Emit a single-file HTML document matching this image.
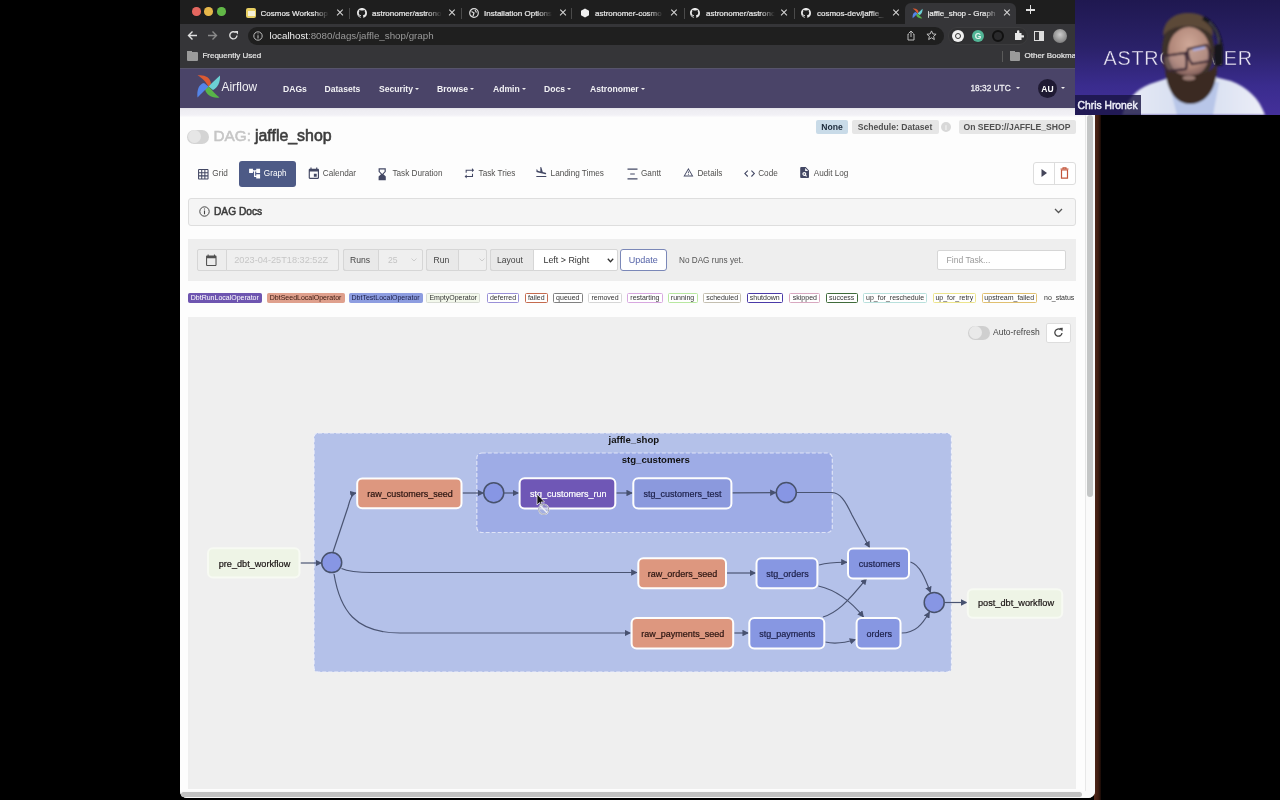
<!DOCTYPE html>
<html><head><meta charset="utf-8">
<style>
*{box-sizing:border-box;margin:0;padding:0}
html,body{width:1280px;height:800px;overflow:hidden;background:#000;font-family:"Liberation Sans",sans-serif;-webkit-font-smoothing:antialiased}
#win,.gl{will-change:transform}
.a{position:absolute}
.t{position:absolute;white-space:nowrap;line-height:1}
#win{position:absolute;left:180px;top:0;width:915px;height:798px;background:#fdfdfd;overflow:hidden;border-radius:0 0 7px 7px}
.tab{position:absolute;top:8.7px;font-size:8px;color:#eaeaea;white-space:nowrap;line-height:10px;-webkit-text-stroke:0.2px #eaeaea}
.x{position:absolute;top:9.5px;width:7px;height:7px;font-size:0}
.x:before,.x:after{content:"";position:absolute;left:-0.5px;top:2.8px;width:8px;height:1.3px;background:#d8d8d8;transform:rotate(45deg)}
.x:after{transform:rotate(-45deg)}
.sep{position:absolute;top:8px;width:1px;height:11px;background:#4a4a4a}
.nav{position:absolute;top:83.6px;font-size:8.6px;font-weight:bold;color:#f2f2f5;white-space:nowrap;line-height:10px}
.car{display:inline-block;width:0;height:0;border-left:2.5px solid transparent;border-right:2.5px solid transparent;border-top:2.5px solid #eee;margin-left:2px;vertical-align:middle}
.tb{position:absolute;top:169px;font-size:8.2px;color:#51504f;white-space:nowrap;line-height:10px}
.lg{position:absolute;top:292.5px;height:10.5px;font-size:7px;line-height:8.6px;border:1px solid;border-radius:1.5px;color:#333;text-align:center;white-space:nowrap}
.node{position:absolute;height:31px;border:2px solid #fff;border-radius:5px;font-size:9px;line-height:27px;text-align:center;color:#222;white-space:nowrap}
</style></head><body>
<div class="a" style="left:1094px;top:0;width:7px;height:800px;background:linear-gradient(90deg,#52281a,#3e1c10 60%,#180a06)"></div>
<div id="win">
  <!-- tab strip -->
  <div class="a" style="left:0;top:0;width:915px;height:24px;background:#1e1e1e"></div>
  <div class="a" style="left:12px;top:7px;width:8.5px;height:8.5px;border-radius:50%;background:#e4675f"></div>
  <div class="a" style="left:24px;top:7px;width:8.5px;height:8.5px;border-radius:50%;background:#e6b74a"></div>
  <div class="a" style="left:37px;top:7px;width:8.5px;height:8.5px;border-radius:50%;background:#62b847"></div>

  <div class="a" style="left:66px;top:8px;width:10px;height:10px;border-radius:2px;background:#e8cf63"></div>
  <div class="a" style="left:67.5px;top:11px;width:7px;height:5px;background:#f5f0d8"></div>
  <div class="tab" style="left:80.5px;width:68px;overflow:hidden;-webkit-mask-image:linear-gradient(90deg,#000 78%,transparent 100%)">Cosmos Workshop</div>
  <div class="x" style="left:156.5px"></div>
  <div class="sep" style="left:169px"></div>

  <svg class="a" style="left:177px;top:8px" width="10" height="10" viewBox="0 0 16 16"><path fill="#e8e8e8" d="M8 0C3.58 0 0 3.58 0 8c0 3.54 2.29 6.53 5.47 7.59.4.07.55-.17.55-.38v-1.34c-2.23.48-2.7-1.07-2.7-1.07-.36-.92-.89-1.17-.89-1.17-.73-.5.05-.49.05-.49.8.06 1.23.83 1.23.83.72 1.22 1.87.87 2.33.66.07-.52.28-.87.51-1.07-1.78-.2-3.65-.89-3.65-3.95 0-.87.31-1.59.83-2.15-.08-.2-.36-1.02.08-2.12 0 0 .67-.21 2.2.82A7.7 7.7 0 018 3.87c.68 0 1.36.09 2 .27 1.53-1.04 2.2-.82 2.2-.82.44 1.1.16 1.92.08 2.12.51.56.82 1.27.82 2.15 0 3.07-1.87 3.75-3.65 3.95.29.25.54.73.54 1.48v2.2c0 .21.15.46.55.38A8.01 8.01 0 0016 8c0-4.42-3.58-8-8-8z"/></svg>
  <div class="tab" style="left:192px;width:70px;overflow:hidden;-webkit-mask-image:linear-gradient(90deg,#000 78%,transparent 100%)">astronomer/astrono</div>
  <div class="x" style="left:268.5px"></div>
  <div class="sep" style="left:281px"></div>

  <svg class="a" style="left:289px;top:8px" width="10" height="10" viewBox="0 0 10 10"><circle cx="5" cy="5" r="4.3" fill="none" stroke="#ddd" stroke-width="1.2"/><path d="M2.5 3.5 L5 5 L4 8 M6 2 L7.5 4.5" stroke="#ddd" stroke-width="1.2" fill="none"/></svg>
  <div class="tab" style="left:304px;width:68px;overflow:hidden;-webkit-mask-image:linear-gradient(90deg,#000 78%,transparent 100%)">Installation Options</div>
  <div class="x" style="left:379.5px"></div>
  <div class="sep" style="left:391px"></div>

  <svg class="a" style="left:400px;top:8px" width="10" height="10" viewBox="0 0 10 10"><path d="M5 0.5 L9 2.8 V7.2 L5 9.5 L1 7.2 V2.8Z" fill="#f0f0f0"/></svg>
  <div class="tab" style="left:415px;width:68px;overflow:hidden;-webkit-mask-image:linear-gradient(90deg,#000 78%,transparent 100%)">astronomer-cosmo</div>
  <div class="x" style="left:490.5px"></div>
  <div class="sep" style="left:504px"></div>

  <svg class="a" style="left:510px;top:8px" width="10" height="10" viewBox="0 0 16 16"><path fill="#e8e8e8" d="M8 0C3.58 0 0 3.58 0 8c0 3.54 2.29 6.53 5.47 7.59.4.07.55-.17.55-.38v-1.34c-2.23.48-2.7-1.070-2.7-1.07-.36-.92-.89-1.17-.89-1.17-.73-.5.05-.49.05-.49.8.06 1.23.83 1.23.83.72 1.22 1.870.87 2.33.66.07-.52.28-.87.51-1.07-1.78-.2-3.65-.89-3.65-3.95 0-.87.31-1.59.83-2.15-.08-.2-.36-1.02.08-2.12 0 0 .67-.21 2.2.82A7.7 7.7 0 018 3.87c.68 0 1.36.09 2 .27 1.53-1.04 2.2-.82 2.2-.82.44 1.1.16 1.92.08 2.12.51.56.82 1.27.82 2.15 0 3.07-1.87 3.75-3.65 3.95.29.25.54.73.54 1.48v2.2c0 .21.15.46.55.38A8.01 8.01 0 0016 8c0-4.42-3.58-8-8-8z"/></svg>
  <div class="tab" style="left:526px;width:69px;overflow:hidden;-webkit-mask-image:linear-gradient(90deg,#000 78%,transparent 100%)">astronomer/astronc</div>
  <div class="x" style="left:600.5px"></div>
  <div class="sep" style="left:614px"></div>

  <svg class="a" style="left:621px;top:8px" width="10" height="10" viewBox="0 0 16 16"><path fill="#e8e8e8" d="M8 0C3.58 0 0 3.58 0 8c0 3.54 2.29 6.53 5.47 7.590.4.07.55-.17.55-.38v-1.34c-2.23.48-2.7-1.07-2.7-1.07-.36-.92-.89-1.17-.89-1.17-.73-.5.05-.49.05-.49.8.06 1.23.83 1.23.83.72 1.22 1.87.87 2.33.66.07-.52.28-.87.51-1.07-1.78-.2-3.65-.89-3.65-3.95 0-.87.31-1.59.83-2.15-.08-.2-.36-1.02.08-2.12 0 0 .67-.21 2.2.82A7.7 7.7 0 018 3.87c.68 0 1.36.09 2 .27 1.53-1.04 2.2-.82 2.2-.82.44 1.1.16 1.92.08 2.12.51.56.82 1.27.82 2.15 0 3.07-1.87 3.75-3.65 3.95.29.25.54.73.54 1.48v2.2c0 .21.15.46.55.38A8.010 8.01 0 0016 8c0-4.42-3.58-8-8-8z"/></svg>
  <div class="tab" style="left:637px;width:69px;overflow:hidden;-webkit-mask-image:linear-gradient(90deg,#000 78%,transparent 100%)">cosmos-dev/jaffle_</div>
  <div class="x" style="left:712.5px"></div>

  <!-- active tab -->
  <div class="a" style="left:725px;top:3px;width:111px;height:22px;background:#353538;border-radius:6px 6px 0 0"></div>
  <svg class="a" style="left:732px;top:7.5px" width="11" height="11" viewBox="0 0 25 25"><path d="M12.5 12.5 C10 8 6 3.5 1.5 1.5 C8 0.5 14.5 3 15 10 Z" fill="#dc5a32"/><path d="M12.5 12.5 C16 9 20 5 24 1.5 C24.5 8 21.5 14 17 16 Z" fill="#6cd0d4"/><path d="M12.5 12.5 C16 16 20 21 23.5 23.5 C16 24.5 10 21 9 15 Z" fill="#58b548"/><path d="M12.5 12.5 C9 16 5 20 1.5 23.5 C0.5 16 3 10 8 9 Z" fill="#5484e8"/></svg>
  <div class="tab" style="left:747.5px;color:#f0f0f0;width:71px;overflow:hidden;-webkit-mask-image:linear-gradient(90deg,#000 78%,transparent 100%)">jaffle_shop - Graph</div>
  <div class="x" style="left:823.5px"></div>
  <div class="a" style="left:846px;top:9px;width:9px;height:1.5px;background:#e0e0e0"></div><div class="a" style="left:849.75px;top:5.25px;width:1.5px;height:9px;background:#e0e0e0"></div>

  <!-- toolbar -->
  <div class="a" style="left:0;top:24px;width:915px;height:23px;background:#353538"></div>
  <svg class="a" style="left:7px;top:30px" width="11" height="11" viewBox="0 0 11 11"><path d="M10 5.5H1.5M5.5 1.5L1.5 5.5L5.5 9.5" stroke="#e0e0e0" stroke-width="1.4" fill="none"/></svg>
  <svg class="a" style="left:27px;top:30px" width="11" height="11" viewBox="0 0 11 11"><path d="M1 5.5H9.5M5.5 1.5L9.5 5.5L5.5 9.5" stroke="#8a8a8a" stroke-width="1.4" fill="none"/></svg>
  <svg class="a" style="left:48px;top:30px" width="11" height="11" viewBox="0 0 11 11"><path d="M9 5.5A3.6 3.6 0 1 1 7.8 2.6" stroke="#e0e0e0" stroke-width="1.4" fill="none"/><path d="M6.5 1 L10 1 L10 4.5Z" fill="#e0e0e0"/></svg>
  <div class="a" style="left:68px;top:27px;width:696px;height:18px;border-radius:9px;background:#1f1f1f"></div>
  <svg class="a" style="left:73px;top:31px" width="10" height="10" viewBox="0 0 10 10"><circle cx="5" cy="5" r="4.2" fill="none" stroke="#bbb" stroke-width="1"/><path d="M5 4.2V7.5M5 2.4V3.3" stroke="#bbb" stroke-width="1.1"/></svg>
  <div class="t" style="left:89.5px;top:31px;font-size:9.75px;color:#f0f0f0">localhost<span style="color:#9a9a9a">:8080/dags/jaffle_shop/graph</span></div>
  <svg class="a" style="left:726px;top:30px" width="10" height="11" viewBox="0 0 10 11"><path d="M3 4H2V10H8V4H7M5 7V1M3 3L5 1L7 3" stroke="#bbb" stroke-width="1" fill="none"/></svg>
  <svg class="a" style="left:746px;top:30px" width="11" height="11" viewBox="0 0 12 12"><path d="M6 1L7.5 4.3L11 4.6L8.3 6.9L9.1 10.4L6 8.5L2.9 10.4L3.7 6.9L1 4.6L4.5 4.3Z" stroke="#ccc" stroke-width="1" fill="none"/></svg>
  <div class="a" style="left:768px;top:27px;width:80px;height:18px;border-radius:9px;background:#303032;border:1px solid #3c3c3e"></div>
  <div class="a" style="left:772px;top:30px;width:12px;height:12px;border-radius:50%;background:#f0f0f0"></div>
  <div class="a" style="left:775px;top:33px;width:6px;height:6px;border-radius:50%;border:1.5px solid #333"></div>
  <div class="a" style="left:792px;top:30px;width:12px;height:12px;border-radius:50%;background:#52b596"></div>
  <div class="t" style="left:792px;top:32px;width:12px;text-align:center;font-size:8.5px;font-weight:bold;color:#e8f5ef">G</div>
  <div class="a" style="left:812px;top:30px;width:12px;height:12px;border-radius:50%;background:#2a2a2c;border:2.5px solid #111"></div>
  <svg class="a" style="left:833px;top:30px" width="11" height="11" viewBox="0 0 11 11"><path d="M2 3H4V1.5A1.2 1.2 0 0 1 6.4 1.5V3H8.5V5.2H10A1.2 1.2 0 0 1 10 7.6H8.5V10H2Z" fill="#e8e8e8"/></svg>
  <div class="a" style="left:854px;top:31px;width:10px;height:10px;border:1.5px solid #ddd"></div>
  <div class="a" style="left:859px;top:31px;width:5px;height:10px;background:#ddd"></div>
  <div class="a" style="left:873px;top:29px;width:14px;height:14px;border-radius:50%;background:radial-gradient(circle at 50% 40%,#ccc,#666)"></div>

  <!-- bookmarks -->
  <div class="a" style="left:0;top:47px;width:915px;height:21px;background:#353538"></div>
  <div class="a" style="left:7px;top:52px;width:10.5px;height:8.5px;border-radius:1px;background:#9a9a9a"></div>
  <div class="a" style="left:7px;top:51px;width:5px;height:2px;background:#9a9a9a"></div>
  <div class="tab" style="left:22.4px;top:51px;color:#e4e4e4">Frequently Used</div>
  <div class="a" style="left:822px;top:51px;width:1px;height:11px;background:#5a5a5a"></div>
  <div class="a" style="left:829.5px;top:52px;width:10.5px;height:8.5px;border-radius:1px;background:#9a9a9a"></div>
  <div class="a" style="left:829.5px;top:51px;width:5px;height:2px;background:#9a9a9a"></div>
  <div class="tab" style="left:844.5px;top:51px;color:#e4e4e4">Other Bookmarks</div>

  <!-- navbar -->
  <div class="a" style="left:0;top:68px;width:915px;height:40px;background:#4a4468"></div>
  <div class="a" style="left:0;top:68px;width:915px;height:1px;background:#57546c"></div>
  <svg class="a" style="left:16px;top:74px" width="25" height="25" viewBox="0 0 25 25">
    <path d="M12.5 12.5 C10 8 6 3.5 1.5 1.5 C8 0.5 14.5 3 15 10 Z" fill="#dc5a32"/>
    <path d="M12.5 12.5 C16 9 20 5 24 1.5 C24.5 8 21.5 14 17 16 Z" fill="#6cd0d4"/>
    <path d="M12.5 12.5 C16 16 20 21 23.5 23.5 C16 24.5 10 21 9 15 Z" fill="#58b548"/>
    <path d="M12.5 12.5 C9 16 5 20 1.5 23.5 C0.5 16 3 10 8 9 Z" fill="#5484e8"/>
  </svg>
  <div class="t" style="left:41.5px;top:82px;font-size:11.9px;color:#f0f0f4">Airflow</div>
  <div class="nav" style="left:103px">DAGs</div>
  <div class="nav" style="left:144.5px">Datasets</div>
  <div class="nav" style="left:199px">Security<span class="car"></span></div>
  <div class="nav" style="left:257px">Browse<span class="car"></span></div>
  <div class="nav" style="left:313px">Admin<span class="car"></span></div>
  <div class="nav" style="left:364px">Docs<span class="car"></span></div>
  <div class="nav" style="left:410px">Astronomer<span class="car"></span></div>
  <div class="t" style="left:790.5px;top:83.5px;font-size:8.3px;color:#ecebf0;-webkit-text-stroke:0.3px #ecebf0">18:32 UTC<span class="car" style="margin-left:5px"></span></div>
  <div class="a" style="left:858px;top:79px;width:19px;height:19px;border-radius:50%;background:#1f1a33"></div>
  <div class="t" style="left:858px;top:84.5px;width:19px;text-align:center;font-size:8.5px;font-weight:bold;color:#fff">AU</div>
  <span class="car a" style="left:879px;top:87px"></span>
  <!-- shadow under nav -->
  <div class="a" style="left:0;top:108px;width:915px;height:9px;background:linear-gradient(#e2e1e8 0px,#eeedf2 2px,#f2f1f6 7px,#fbfbfc 9px)"></div>

  <!-- DAG header -->
  <div class="a" style="left:7px;top:129.5px;width:22px;height:14px;border-radius:7px;background:#d4d4d4"></div>
  <div class="a" style="left:7.5px;top:130px;width:13px;height:13px;border-radius:50%;background:#e6e6e6"></div>
  <div class="t" style="left:33.5px;top:128px;font-size:15.3px;color:#c6c6c6;-webkit-text-stroke:0.55px #c6c6c6">DAG:</div>
  <div class="t" style="left:75px;top:127.5px;font-size:15.9px;color:#3c3c3c;-webkit-text-stroke:0.6px #3c3c3c">jaffle_shop</div>

  <div class="a" style="left:636px;top:120px;width:32px;height:14px;background:#c9dbe8;border-radius:2px"></div>
  <div class="t" style="left:636px;top:123px;width:32px;text-align:center;font-size:8.6px;font-weight:bold;color:#1c2a3a">None</div>
  <div class="a" style="left:671.5px;top:120px;width:87px;height:14px;background:#e6e6e6;border-radius:2px"></div>
  <div class="t" style="left:671.5px;top:123px;width:87px;text-align:center;font-size:8.6px;font-weight:bold;color:#505050">Schedule: Dataset</div>
  <div class="a" style="left:761px;top:122px;width:10px;height:10px;border-radius:50%;background:#d8d8d8"></div>
  <div class="t" style="left:761px;top:123.5px;width:10px;text-align:center;font-size:7px;font-weight:bold;color:#f4f4f4">i</div>
  <div class="a" style="left:778.5px;top:120px;width:117px;height:14px;background:#e6e6e6;border-radius:2px"></div>
  <div class="t" style="left:778.5px;top:123px;width:117px;text-align:center;font-size:8.6px;font-weight:bold;color:#505050">On SEED://JAFFLE_SHOP</div>

  <!-- tabs -->
  <div class="a" style="left:59px;top:161px;width:57px;height:26px;background:#4d5a86;border-radius:3px"></div>
  <svg class="a" style="left:16.95px;top:167.75px" width="12.60" height="12.60" viewBox="0 0 24 24"><path fill="#434864" d="M20 2H4c-1.1 0-2 .9-2 2v16c0 1.1.9 2 2 2h16c1.1 0 2-.9 2-2V4c0-1.1-.9-2-2-2zM8 20H4v-4h4v4zm0-6H4v-4h4v4zm0-6H4V4h4v4zm6 12h-4v-4h4v4zm0-6h-4v-4h4v4zm0-6h-4V4h4v4zm6 12h-4v-4h4v4zm0-6h-4v-4h4v4zm0-6h-4V4h4v4z"/></svg>
  <div class="tb" style="left:32.3px">Grid</div>
  <svg class="a" style="left:67.90px;top:167.35px" width="13.20" height="13.20" viewBox="0 0 24 24"><path fill="#ffffff" d="M22 11V3h-7v3H9V3H2v8h7V8h2v10h4v3h7v-8h-7v3h-2V8h2v3z"/></svg>
  <div class="tb" style="left:83.8px;color:#fff">Graph</div>
  <svg class="a" style="left:126.90px;top:166.90px" width="13.73" height="13.73" viewBox="0 0 24 24"><path fill="#434864" d="M17 12h-5v5h5v-5zM16 1v2H8V1H6v2H5c-1.11 0-1.99.9-1.99 2L3 19c0 1.1.89 2 2 2h14c1.1 0 2-.9 2-2V5c0-1.1-.9-2-2-2h-1V1h-2zm3 18H5V8h14v11z"/></svg>
  <div class="tb" style="left:142.8px">Calendar</div>
  <svg class="a" style="left:195.40px;top:166.70px" width="14.40" height="14.40" viewBox="0 0 24 24"><path fill="#434864" d="M18 22l-.01-6L14 12l3.99-4.01L18 2H6v6l4 4-4 3.99V22h12zM8 7.5V4h8v3.5l-4 4-4-4z"/></svg>
  <div class="tb" style="left:212.4px">Task Duration</div>
  <svg class="a" style="left:283.20px;top:166.90px" width="12.67" height="12.67" viewBox="0 0 24 24"><path fill="#434864" d="M7 7h10v3l4-4-4-4v3H5v6h2V7zm10 10H7v-3l-4 4 4 4v-3h12v-6h-2v4z"/></svg>
  <div class="tb" style="left:298.6px">Task Tries</div>
  <svg class="a" style="left:355.10px;top:166.45px" width="12.62" height="12.62" viewBox="0 0 24 24"><path fill="#434864" d="M2.5 19h19v2h-19v-2zm7.18-5.73l4.35 1.16 5.31 1.42c.8.21 1.62-.26 1.84-1.06.21-.8-.26-1.620-1.06-1.84l-5.31-1.42-2.76-9.02L10.12 2v8.28L5.15 8.95l-.93-2.32-1.45-.39v5.17l1.6.43 5.31 1.43z"/></svg>
  <div class="tb" style="left:370.6px">Landing Times</div>
  <svg class="a" style="left:446.7px;top:167.5px" width="11" height="12" viewBox="0 0 11 12"><path d="M0.5 1.2H10.5M3.2 6H7.8M0.5 10.8H10.5" stroke="#434864" stroke-width="1.2"/></svg>
  <div class="tb" style="left:461px">Gantt</div>
  <svg class="a" style="left:503.15px;top:167.10px" width="10.80" height="10.80" viewBox="0 0 24 24"><path fill="#434864" d="M12 5.99L19.53 19H4.47L12 5.99M12 2L1 21h22L12 2zm1 14h-2v2h2v-2zm0-6h-2v4h2v-4z"/></svg>
  <div class="tb" style="left:517.4px">Details</div>
  <svg class="a" style="left:562.65px;top:166.70px" width="13.20" height="13.20" viewBox="0 0 24 24"><path fill="#434864" d="M9.4 16.6L4.8 12l4.6-4.6L8 6l-6 6 6 6 1.4-1.4zm5.2 0l4.6-4.6-4.6-4.6L16 6l6 6-6 6-1.4-1.4z"/></svg>
  <div class="tb" style="left:578.2px">Code</div>
  <svg class="a" style="left:618.40px;top:166.40px" width="13.20" height="13.20" viewBox="0 0 24 24"><path fill="#434864" d="M14 2H6c-1.1 0-1.99.9-1.99 2L4 20c0 1.1.89 2 1.99 2H18c1.1 0 2-.9 2-2V8l-6-6zm1.04 17.45l-1.88-1.88c-1.33.71-3.01.53-4.13-.59-1.37-1.37-1.37-3.58 0-4.95s3.58-1.37 4.95 0c1.12 1.12 1.31 2.8.59 4.13l1.88 1.88-1.41 1.41zM13 9V3.5L18.5 9H13z"/><circle cx="11.5" cy="14.5" r="1.5" fill="#434864"/></svg>
  <div class="tb" style="left:633.8px">Audit Log</div>

  <div class="a" style="left:853px;top:161.5px;width:42.5px;height:23.5px;border:1px solid #ddd;border-radius:3px;background:#fff"></div>
  <div class="a" style="left:874.4px;top:162px;width:1px;height:22.5px;background:#ddd"></div>
  <svg class="a" style="left:860px;top:168px" width="8" height="10" viewBox="0 0 8 10"><path d="M1.5 1L7 5L1.5 9Z" fill="#45465a"/></svg>
  <svg class="a" style="left:880px;top:167px" width="9" height="12" viewBox="0 0 9 12"><path d="M0.5 2H8.5M3 2V0.8H6V2" stroke="#c3553a" stroke-width="1.1" fill="none"/><path d="M1.5 3H7.5V11.2H1.5Z" fill="none" stroke="#c3553a" stroke-width="1.2"/></svg>

  <!-- DAG docs -->
  <div class="a" style="left:7.5px;top:197.5px;width:888px;height:28.5px;background:#f5f5f5;border:1px solid #dedede;border-radius:3px"></div>
  <svg class="a" style="left:19px;top:206px" width="11" height="11" viewBox="0 0 11 11"><circle cx="5.5" cy="5.5" r="4.7" fill="none" stroke="#444" stroke-width="1"/><path d="M5.5 4.5V8.2M5.5 2.6V3.5" stroke="#444" stroke-width="1.1"/></svg>
  <div class="t" style="left:34px;top:207.3px;font-size:10.2px;color:#3a3a3a;-webkit-text-stroke:0.5px #3a3a3a">DAG Docs</div>
  <svg class="a" style="left:874px;top:208px" width="9" height="6" viewBox="0 0 9 6"><path d="M1 1L4.5 4.5L8 1" stroke="#555" stroke-width="1.3" fill="none"/></svg>

  <!-- controls -->
  <div class="a" style="left:7.5px;top:239px;width:888.5px;height:42px;background:#eeeeee"></div>
  <div class="a" style="left:17px;top:249px;width:142px;height:21.5px;border:1px solid #d6d6d6;border-radius:2px;background:#ededed"></div>
  <div class="a" style="left:45.5px;top:249px;width:113.5px;height:21.5px;border:1px solid #d6d6d6;border-radius:0 2px 2px 0;background:#efefef"></div>
  <svg class="a" style="left:25.35px;top:253.5px" width="12.6" height="12.6" viewBox="0 0 24 24"><path fill="#505050" d="M20 3h-1V1h-2v2H7V1H5v2H4c-1.1 0-2 .9-2 2v16c0 1.1.9 2 2 2h16c1.1 0 2-.9 2-2V5c0-1.1-.9-2-2-2zm0 18H4V8h16v13z"/></svg>
  <div class="t" style="left:54.2px;top:256px;font-size:9.2px;color:#c6c6c6">2023-04-25T18:32:52Z</div>
  <div class="a" style="left:162.5px;top:249px;width:80px;height:21.5px;border:1px solid #d6d6d6;border-radius:2px;background:#efefef"></div>
  <div class="a" style="left:162.5px;top:249px;width:36px;height:21.5px;border:1px solid #d6d6d6;border-radius:2px 0 0 3px;background:#e9e9e9"></div>
  <div class="t" style="left:170px;top:255.5px;font-size:8.6px;color:#444">Runs</div>
  <div class="t" style="left:208px;top:255.5px;font-size:8.6px;color:#c4c4c4">25</div>
  <svg class="a" style="left:231px;top:258px" width="6" height="4" viewBox="0 0 6 4"><path d="M0.5 0.5L3 3L5.5 0.5" stroke="#c8c8c8" stroke-width="0.9" fill="none"/></svg>
  <div class="a" style="left:245.5px;top:249px;width:61.5px;height:21.5px;border:1px solid #d6d6d6;border-radius:2px;background:#efefef"></div>
  <div class="a" style="left:245.5px;top:249px;width:33px;height:21.5px;border:1px solid #d6d6d6;border-radius:2px 0 0 3px;background:#e9e9e9"></div>
  <div class="t" style="left:253.5px;top:255.5px;font-size:8.6px;color:#444">Run</div>
  <svg class="a" style="left:299px;top:258px" width="6" height="4" viewBox="0 0 6 4"><path d="M0.5 0.5L3 3L5.5 0.5" stroke="#c8c8c8" stroke-width="0.9" fill="none"/></svg>
  <div class="a" style="left:309.5px;top:249px;width:128px;height:21.5px;border:1px solid #d6d6d6;border-radius:2px;background:#fff"></div>
  <div class="a" style="left:309.5px;top:249px;width:44px;height:21.5px;border:1px solid #d6d6d6;border-radius:2px 0 0 3px;background:#e9e9e9"></div>
  <div class="t" style="left:317px;top:255.5px;font-size:8.6px;color:#444">Layout</div>
  <div class="t" style="left:363.5px;top:255.5px;font-size:8.9px;color:#333">Left &gt; Right</div>
  <svg class="a" style="left:427px;top:257.5px" width="7" height="5" viewBox="0 0 7 5"><path d="M0.8 0.8L3.5 3.8L6.2 0.8" stroke="#333" stroke-width="1.3" fill="none"/></svg>
  <div class="a" style="left:440px;top:249px;width:46.5px;height:22px;border:1px solid #7b88b8;border-radius:3px;background:#fff"></div>
  <div class="t" style="left:440px;top:255.5px;width:46.5px;text-align:center;font-size:9px;color:#5563a8">Update</div>
  <div class="t" style="left:499px;top:256.5px;font-size:8.2px;color:#555">No DAG runs yet.</div>
  <div class="a" style="left:757.3px;top:249.5px;width:129.2px;height:20.5px;border:1px solid #d6d6d6;border-radius:2px;background:#fff"></div>
  <div class="t" style="left:766.5px;top:255.5px;font-size:8.6px;color:#9a9a9a">Find Task...</div>

  <!-- legend -->
  <div class="lg" style="left:7.8px;width:74px;background:#6e55b0;border-color:#6e55b0;color:#fff">DbtRunLocalOperator</div>
  <div class="lg" style="left:86.6px;width:78px;background:#dfa08d;border-color:#dfa08d;color:#3a1a10">DbtSeedLocalOperator</div>
  <div class="lg" style="left:168.6px;width:74px;background:#8d9de0;border-color:#8d9de0;color:#1c1f48">DbtTestLocalOperator</div>
  <div class="lg" style="left:246.4px;width:53.5px;background:#f3f8ec;border-color:#d8dcd4">EmptyOperator</div>
  <div class="lg" style="left:307px;width:32px;border-color:#9a90d8;background:#fff">deferred</div>
  <div class="lg" style="left:344.5px;width:23.5px;border-color:#c46a4e;background:#fff">failed</div>
  <div class="lg" style="left:373px;width:29.6px;border-color:#808080;background:#fff">queued</div>
  <div class="lg" style="left:408.3px;width:33.5px;border-color:#d6d6d6;background:#fff">removed</div>
  <div class="lg" style="left:447px;width:35.8px;border-color:#d8a8e0;background:#fff">restarting</div>
  <div class="lg" style="left:487.5px;width:30px;border-color:#b8e8a0;background:#fff">running</div>
  <div class="lg" style="left:523px;width:38.3px;border-color:#c4bfb0;background:#fff">scheduled</div>
  <div class="lg" style="left:566.5px;width:36.5px;border-color:#4a3aa8;background:#fff">shutdown</div>
  <div class="lg" style="left:609.4px;width:31px;border-color:#d8a8c0;background:#fff">skipped</div>
  <div class="lg" style="left:645.7px;width:32px;border-color:#3f6b3a;background:#fff">success</div>
  <div class="lg" style="left:683.2px;width:63.8px;border-color:#b8e0dc;background:#fff">up_for_reschedule</div>
  <div class="lg" style="left:752.8px;width:43px;border-color:#ece48c;background:#fff">up_for_retry</div>
  <div class="lg" style="left:801.5px;width:55.5px;border-color:#e0c070;background:#fff">upstream_failed</div>
  <div class="t" style="left:864px;top:294px;font-size:7px;color:#333">no_status</div>

  <!-- graph panel -->
  <div class="a" style="left:8px;top:317px;width:888px;height:472px;background:#efefef"></div>
</div>
<!-- auto refresh -->
<div class="a" style="left:968px;top:325.5px;width:22px;height:14px;border-radius:7px;background:#cfcfcf"></div>
<div class="a" style="left:968.5px;top:326px;width:13px;height:13px;border-radius:50%;background:#e9e9e9"></div>
<div class="t" style="left:993px;top:327.5px;font-size:8.5px;color:#444">Auto-refresh</div>
<div class="a" style="left:1045.5px;top:322.5px;width:25.5px;height:20px;border:1px solid #ddd;border-radius:2px;background:#fff"></div>
<svg class="a" style="left:1053px;top:327px" width="11" height="11" viewBox="0 0 11 11"><path d="M9 6A3.6 3.6 0 1 1 7.6 2.7" stroke="#444" stroke-width="1.3" fill="none"/><path d="M6.2 1L9.8 0.8L9.4 4.4Z" fill="#444"/></svg>

<!-- graph -->
<svg class="a gl" style="left:0;top:0" width="1280" height="800" viewBox="0 0 1280 800">
  <defs>
    <marker id="ar" viewBox="0 0 10 10" refX="9" refY="5" markerWidth="6.5" markerHeight="6.5" markerUnits="userSpaceOnUse" orient="auto"><path d="M0 0L10 5L0 10Z" fill="#475170"/></marker>
  </defs>
  <rect x="314" y="433" width="637.5" height="239" rx="4" fill="#b4c1e9" stroke="#eef0fa" stroke-width="1.2" stroke-dasharray="4 2"/>
  <rect x="476.8" y="453" width="355.5" height="79.5" rx="5" fill="#9eace6" stroke="#dfe4f7" stroke-width="1.2" stroke-dasharray="4 2"/>
  <text x="633.8" y="443" font-family="Liberation Sans" font-size="9.6" font-weight="bold" fill="#111" text-anchor="middle">jaffle_shop</text>
  <text x="655.8" y="463.2" font-family="Liberation Sans" font-size="9.6" font-weight="bold" fill="#111" text-anchor="middle">stg_customers</text>
  <g fill="none" stroke="#4a5472" stroke-width="1.2" marker-end="url(#ar)">
    <path d="M300.5 563 L321.5 563"/>
    <path d="M333 552 L348 507 Q351 494 356 493"/>
    <path d="M341.5 568.5 Q350 572.5 372 572.5 L637 572.5"/>
    <path d="M334 574 C340 610 355 633 400 633 L630.5 633"/>
    <path d="M462.5 493 L483.5 493"/>
    <path d="M504 493 L518.5 493"/>
    <path d="M616.3 493 L632.3 493"/>
    <path d="M732.4 492.8 L776 492.6"/>
    <path d="M797 492.5 L832 492.5 C840 493 845 500 852 515 L869.5 547.5"/>
    <path d="M727 573 L755.5 573"/>
    <path d="M819 565 Q830 562 847 562.3"/>
    <path d="M818.4 586 C836 590 850 600 863.5 617"/>
    <path d="M734.2 633 L748.3 633"/>
    <path d="M823 617 C836 613 846 604 866.5 578.6"/>
    <path d="M825.3 642 Q838 645 855.6 639.5"/>
    <path d="M910.5 562 C920 565 925 578 930.5 592.5"/>
    <path d="M901.5 633 C915 633 922 625 929.5 612"/>
    <path d="M944.5 602.5 L966.8 602.5"/>
  </g>
  <g stroke="#48526c" stroke-width="1.5" fill="#8796e4">
    <circle cx="331.7" cy="562.6" r="10"/>
    <circle cx="493.75" cy="492.7" r="10"/>
    <circle cx="786.3" cy="492.6" r="10"/>
    <circle cx="934.2" cy="602.4" r="10"/>
  </g>
  <g stroke="#fdfdfd" stroke-width="2">
    <rect x="208" y="548.2" width="91.5" height="29.3" rx="5" fill="#eef4e6" stroke="#f7faf3"/>
    <rect x="357.2" y="478.5" width="104.3" height="29.8" rx="5" fill="#dd977f"/>
    <rect x="519.6" y="478.2" width="95.7" height="30.3" rx="5" fill="#6f57b6"/>
    <rect x="633.3" y="478.2" width="98.1" height="30.3" rx="5" fill="#8b99dd"/>
    <rect x="638.3" y="558.3" width="87.7" height="30" rx="5" fill="#dd977f"/>
    <rect x="756.5" y="558.3" width="60.9" height="30" rx="5" fill="#8797e2"/>
    <rect x="848" y="548.4" width="61" height="30.1" rx="5" fill="#8797e2"/>
    <rect x="631.6" y="618" width="101.6" height="30.4" rx="5" fill="#dd977f"/>
    <rect x="749.3" y="618" width="75" height="30.4" rx="5" fill="#8797e2"/>
    <rect x="856.6" y="618" width="43.9" height="30.4" rx="5" fill="#8797e2"/>
    <rect x="967.8" y="589.3" width="94.4" height="28.5" rx="5" fill="#eef4e6" stroke="#f7faf3"/>
  </g>
  <g font-family="Liberation Sans" font-size="9" fill="#1a1414" stroke="#1a1414" stroke-width="0.2" text-anchor="middle">
    <text x="254.5" y="566.5" font-size="9.15">pre_dbt_workflow</text>
    <text x="410" y="496.8" fill="#2a1410" stroke="#2a1410">raw_customers_seed</text>
    <text x="568.2" y="496.8" fill="#fff" stroke="#fff">stg_customers_run</text>
    <text x="682.4" y="496.6" fill="#1c1f48" stroke="#1c1f48">stg_customers_test</text>
    <text x="682.6" y="576.6" fill="#2a1410" stroke="#2a1410">raw_orders_seed</text>
    <text x="787.5" y="576.6" fill="#1c1f48" stroke="#1c1f48">stg_orders</text>
    <text x="879.5" y="566.6" fill="#1c1f48" stroke="#1c1f48">customers</text>
    <text x="682.8" y="636.6" fill="#2a1410" stroke="#2a1410">raw_payments_seed</text>
    <text x="787.2" y="636.6" fill="#1c1f48" stroke="#1c1f48">stg_payments</text>
    <text x="879.3" y="636.6" fill="#1c1f48" stroke="#1c1f48">orders</text>
    <text x="1016" y="606.4" font-size="9.2">post_dbt_workflow</text>
  </g>
  <!-- cursor -->
  <path d="M537 494 L537 505 L539.5 502.5 L541.5 507 L543 506.3 L541 502 L544.5 502 Z" fill="#111" stroke="#fff" stroke-width="0.7"/>
  <circle cx="543.7" cy="509.3" r="5" fill="#a8b0d8" fill-opacity="0.5" stroke="#f0f0f6" stroke-width="1.6"/>
  <circle cx="543.7" cy="509.3" r="5" fill="none" stroke="#6a6e80" stroke-width="0.6"/>
  <path d="M540.2 505.8 L547.2 512.8" stroke="#eef0f6" stroke-width="1.5"/>
</svg>

<!-- scrollbars -->
<div class="a" style="left:1085px;top:108px;width:9.5px;height:684px;background:#fafafa;border-left:1px solid #e8e8e8"></div>
<div class="a" style="left:1087px;top:115px;width:6px;height:382px;border-radius:3px;background:#c4c6c6"></div>
<div class="a" style="left:180px;top:791px;width:914.5px;height:7px;background:#fafafa;border-radius:0 0 7px 7px"></div>
<div class="a" style="left:181px;top:792px;width:901px;height:4.5px;border-radius:2.5px;background:#c2c2c2"></div>

<!-- webcam -->
<div class="a gl" style="left:1075px;top:0;width:205px;height:115px;background:linear-gradient(#1f1850 0%,#2a2168 40%,#3a2c8e 75%,#44309a 100%);overflow:hidden">
<svg width="205" height="115" viewBox="0 0 205 115">
  <defs>
    <filter id="bl" x="-20%" y="-20%" width="140%" height="140%"><feGaussianBlur stdDeviation="0.45"/></filter>
    <filter id="bl2" x="-20%" y="-20%" width="140%" height="140%"><feGaussianBlur stdDeviation="1.1"/></filter>
    <radialGradient id="sk" cx="50%" cy="35%" r="65%"><stop offset="0" stop-color="#cfa898"/><stop offset="0.7" stop-color="#b08678"/><stop offset="1" stop-color="#7a5a58"/></radialGradient>
    <linearGradient id="sh" x1="0" x2="1"><stop offset="0" stop-color="#e8ebf6"/><stop offset="0.5" stop-color="#d4dcf0"/><stop offset="1" stop-color="#eceef7"/></linearGradient>
  </defs>
  <text x="28.5" y="64.8" font-family="Liberation Sans" font-size="19.8" fill="#ece8f8" stroke="#2c2268" stroke-width="0.35" textLength="148.5" lengthAdjust="spacing" filter="url(#bl)">ASTRONOMER</text>
  <g filter="url(#bl2)">
    <path d="M47 115 C52 100 60 90 75 84 L96 77 L140 77 L156 81 C172 87 184 98 190 115 Z" fill="url(#sh)"/>
    <path d="M94 84 L102 115 L138 115 L144 82 Z" fill="#b8c6e8"/>
    <ellipse cx="113" cy="50" rx="26" ry="36" fill="#3e302c"/>
    <path d="M88 36 C88 20 100 13 113 13 C128 13 138 20 138 36 C130 28 122 26 112 26 C100 26 92 30 88 36Z" fill="#5c4838"/>
    <ellipse cx="114" cy="52" rx="21" ry="25" fill="url(#sk)"/>
    <path d="M90 64 C90 88 100 104 115 104 C132 104 143 88 142 62 C138 70 132 74 126 73 C120 76 108 76 102 73 C96 73 92 70 90 64Z" fill="#3a2a24"/>
    <ellipse cx="114" cy="78" rx="6.5" ry="2.5" fill="#9a7a72"/>
    <path d="M89 56 L110 53 Q113 61 111 69 L93 71 Q87 65 89 56 Z" fill="#b89a98" opacity="0.35" stroke="#3a2836" stroke-width="2.2"/>
    <path d="M113 49 L132 45 Q136 52 134 61 L117 64 Q112 57 113 49 Z" fill="#b89a98" opacity="0.35"/>
    <path d="M113 49 L132 45 Q136 52 134 61 L117 64 Q112 57 113 49 Z" fill="none" stroke="#3a2836" stroke-width="2.2"/>
    <path d="M89 56 L110 53 Q113 61 111 69 L93 71 Q87 65 89 56 Z" fill="none" stroke="#3a2836" stroke-width="2.2"/>
    <path d="M110 54 L113 51" stroke="#3a2836" stroke-width="2"/>
    <path d="M118 50 L130 47.5" stroke="#a8b8ff" stroke-width="2.2" opacity="0.85"/>
    <path d="M128 18 C140 24 147 38 146 58" fill="none" stroke="#14141a" stroke-width="4"/>
    <path d="M134 22 C141 28 144 36 144 44" fill="none" stroke="#8a8a98" stroke-width="1" opacity="0.7"/>
    <rect x="139" y="44" width="9" height="22" rx="3.5" fill="#18171e"/>
  </g>
  <rect x="0" y="95" width="66" height="20" fill="#1a1545" fill-opacity="0.82"/>
  <text x="2.6" y="108.6" font-family="Liberation Sans" font-size="10.3" fill="#eeeef8" stroke="#eeeef8" stroke-width="0.45">Chris Hronek</text>
</svg>
</div>
</body></html>
